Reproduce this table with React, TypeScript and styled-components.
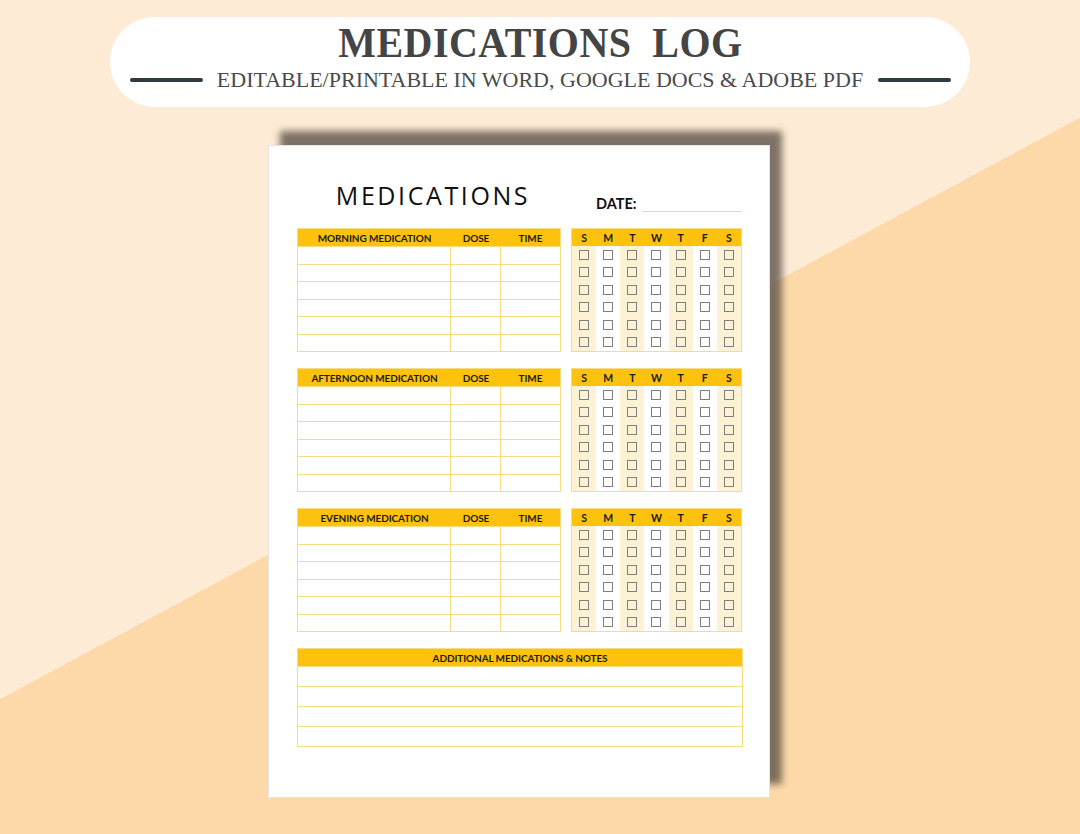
import React from "react";
import styled, { createGlobalStyle } from "styled-components";

const GlobalStyle = createGlobalStyle`
  html, body { margin: 0; padding: 0; }
  body { width: 1080px; height: 834px; overflow: hidden; }
  * { box-sizing: border-box; }
`;

const YELLOW = "#fdc20d";
const LINE = "#f6dc83";
const SHADE = "#fdf3d4";

const Page = styled.div`
  width: 1080px;
  height: 834px;
  background: linear-gradient(151.7deg, #fdebd5 0%, #fdebd5 49.4%, #fdd8a8 49.4%, #fdd8a8 100%);
  display: flex;
  flex-direction: column;
  align-items: center;
  padding-top: 17px;
`;

const Banner = styled.header`
  width: 860px;
  height: 90px;
  background: #ffffff;
  border-radius: 45px;
  display: flex;
  flex-direction: column;
  align-items: center;
  padding-top: 4px;
`;

const BannerTitle = styled.h1`
  margin: 0;
  font-family: "Liberation Serif", "DejaVu Serif", serif;
  font-weight: 700;
  font-size: 43px;
  line-height: 44px;
  color: #444444;
  letter-spacing: 0.5px;
  white-space: pre;
  transform: scaleX(0.93);
`;

const SubRow = styled.div`
  display: flex;
  align-items: center;
  gap: 13px;
  margin-top: 2px;
`;

const Rule = styled.span`
  display: block;
  width: 73px;
  height: 4px;
  border-radius: 2px;
  background: #2e3b42;
`;

const SubTitle = styled.p`
  margin: 0;
  font-family: "Liberation Serif", "DejaVu Serif", serif;
  font-size: 22px;
  line-height: 26px;
  color: #4a4a4a;
  white-space: nowrap;
  width: 649px;
  text-align: center;
`;

const Sheet = styled.main`
  margin-top: 38px;
  margin-right: 42px;
  width: 502px;
  height: 653px;
  background: #ffffff;
  border: 1px solid #e4e4e4;
  box-shadow: 12px -14px 7px rgba(90, 80, 70, 0.78);
  padding: 0 26px 0 28px;
  display: flex;
  flex-direction: column;
`;

const SheetRow = styled.div<{ $gap?: number }>`
  display: grid;
  grid-template-columns: 264px 171px;
  column-gap: 10px;
  margin-bottom: ${(p) => p.$gap ?? 16}px;
`;

const TitleRow = styled(SheetRow)`
  height: 82px;
  align-items: end;
  margin-bottom: 0;
`;

const SheetTitle = styled.h2`
  margin: 0 0 19px 0;
  padding-left: 8px;
  text-align: center;
  font-family: "Open Sans", "Noto Sans", sans-serif;
  font-weight: 400;
  font-size: 25px;
  line-height: 28px;
  letter-spacing: 2.6px;
  color: #111111;
`;

const DateBlock = styled.div`
  display: flex;
  align-items: flex-end;
  padding-left: 25px;
  margin-bottom: 16px;
`;

const DateLabel = styled.span`
  font-family: "Lato", "Open Sans", sans-serif;
  font-weight: 700;
  font-size: 14.5px;
  line-height: 16px;
  color: #111111;
`;

const DateLine = styled.span`
  flex: 1;
  margin-left: 5px;
  height: 1px;
  background: ${LINE};
`;

const MedTable = styled.div`
  display: grid;
  grid-template-columns: 153px 50px 1fr;
  grid-template-rows: 17px repeat(6, 17.5px);
  border: 1px solid ${LINE};
`;

const HeadCell = styled.div`
  background: ${YELLOW};
  display: flex;
  align-items: center;
  justify-content: center;
  font-family: "Lato", "Open Sans", sans-serif;
  font-weight: 700;
  font-size: 10px;
  letter-spacing: -0.1px;
  color: #1a1a1a;
  white-space: nowrap;
`;

const BodyCell = styled.div<{ $last?: boolean }>`
  border-top: 1px solid ${LINE};
  border-right: ${(p) => (p.$last ? "none" : `1px solid ${LINE}`)};
`;

const DayGrid = styled.div`
  display: grid;
  grid-template-columns: repeat(7, 1fr);
  grid-template-rows: 17px repeat(6, 17.5px);
  border: 1px solid ${LINE};
`;

const DayHead = styled(HeadCell)`
  font-size: 10.5px;
`;

const DayCell = styled.div<{ $shade: boolean }>`
  background: ${(p) => (p.$shade ? SHADE : "#ffffff")};
  display: flex;
  align-items: center;
  justify-content: center;
`;

const Box = styled.span`
  width: 10px;
  height: 10px;
  border: 1px solid #7f7f7f;
`;

const Notes = styled.div`
  display: grid;
  grid-template-columns: 1fr;
  grid-template-rows: 17px repeat(4, 20px);
  border: 1px solid ${LINE};
`;

const NoteLine = styled.div`
  border-top: 1px solid ${LINE};
`;

const DAYS = ["S", "M", "T", "W", "T", "F", "S"];
const ROWS = [0, 1, 2, 3, 4, 5];

function Section({ label }: { label: string }) {
  return (
    <SheetRow>
      <MedTable>
        <HeadCell>{label}</HeadCell>
        <HeadCell>DOSE</HeadCell>
        <HeadCell>TIME</HeadCell>
        {ROWS.map((r) => (
          <React.Fragment key={r}>
            <BodyCell />
            <BodyCell />
            <BodyCell $last />
          </React.Fragment>
        ))}
      </MedTable>
      <DayGrid>
        {DAYS.map((d, i) => (
          <DayHead key={`h${i}`}>{d}</DayHead>
        ))}
        {ROWS.map((r) =>
          DAYS.map((_, i) => (
            <DayCell key={`${r}-${i}`} $shade={i % 2 === 0}>
              <Box />
            </DayCell>
          ))
        )}
      </DayGrid>
    </SheetRow>
  );
}

export default function App() {
  return (
    <>
      <GlobalStyle />
      <Page>
        <Banner>
          <BannerTitle>{"MEDICATIONS  LOG"}</BannerTitle>
          <SubRow>
            <Rule />
            <SubTitle>EDITABLE/PRINTABLE IN WORD, GOOGLE DOCS &amp; ADOBE PDF</SubTitle>
            <Rule />
          </SubRow>
        </Banner>
        <Sheet>
          <TitleRow>
            <SheetTitle>MEDICATIONS</SheetTitle>
            <DateBlock>
              <DateLabel>DATE:</DateLabel>
              <DateLine />
            </DateBlock>
          </TitleRow>
          <Section label="MORNING MEDICATION" />
          <Section label="AFTERNOON MEDICATION" />
          <Section label="EVENING MEDICATION" />
          <Notes>
            <HeadCell>ADDITIONAL MEDICATIONS &amp; NOTES</HeadCell>
            <NoteLine />
            <NoteLine />
            <NoteLine />
            <NoteLine />
          </Notes>
        </Sheet>
      </Page>
    </>
  );
}
